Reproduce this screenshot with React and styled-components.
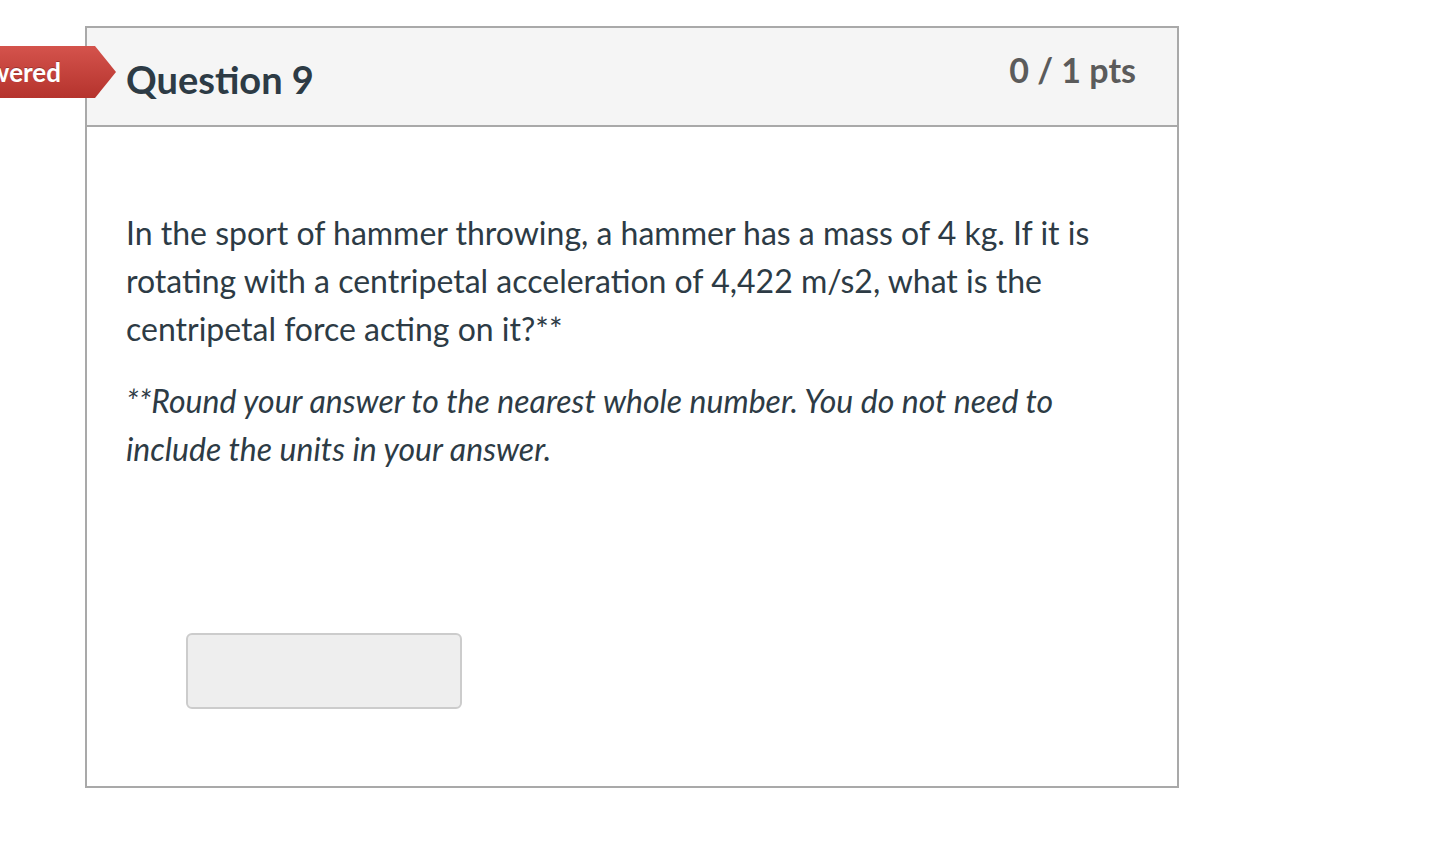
import React from 'react'
import styled, { createGlobalStyle } from 'styled-components'

const GlobalStyle = createGlobalStyle`
  html, body {
    margin: 0;
    padding: 0;
    background: #ffffff;
  }
  body {
    font-family: Lato, "Open Sans", "Liberation Sans", sans-serif;
    color: #2d3b45;
    overflow: hidden;
  }
`

const Page = styled.div`
  padding: 26px 0 0 85px;
`

const Card = styled.div`
  position: relative;
  width: 1094px;
  box-sizing: border-box;
  border: 2px solid #a9a9a9;
  background: #fff;
`

// status ribbon sticking out of the card's left side
const Badge = styled.div`
  position: absolute;
  top: 18px;
  right: calc(100% - 29px);
  height: 52px;
  display: flex;
  align-items: center;
  padding: 0 55px 0 24px;
  white-space: nowrap;
  color: #fff;
  font-weight: 700;
  font-size: 26px;
  background: linear-gradient(#d4534c, #b5332d);
  clip-path: polygon(0 0, calc(100% - 21px) 0, 100% 50%, calc(100% - 21px) 100%, 0 100%);
  text-shadow: 0 -1px 0 rgba(0, 0, 0, 0.25);
`

const Header = styled.div`
  height: 97px;
  display: flex;
  justify-content: space-between;
  align-items: flex-start;
  padding: 0 41px 0 39px;
  background: #f5f5f5;
  border-bottom: 2px solid #a9a9a9;
`

const Title = styled.h2`
  margin: 27px 0 0;
  font-size: 38px;
  line-height: 48px;
  font-weight: 700;
  color: #2d3b45;
`

const Points = styled.div`
  margin-top: 22px;
  font-size: 34px;
  line-height: 40px;
  font-weight: 700;
  color: #5b5b5b;
`

const Body = styled.div`
  padding: 82px 39px 77px;
`

const Text = styled.p`
  margin: 0 0 24px;
  font-size: 32px;
  line-height: 48px;
  font-style: ${(p) => (p.italic ? 'italic' : 'normal')};
`

const AnswerRow = styled.div`
  padding: 136px 0 0 60px;
`

const AnswerInput = styled.input`
  display: block;
  width: 276px;
  height: 76px;
  box-sizing: border-box;
  background: #eeeeee;
  border: 2px solid #cccccc;
  border-radius: 6px;
  font-family: inherit;
  font-size: 26px;
  padding: 0 12px;
  outline: none;
`

const App = () => {
  return (
    <Page>
      <GlobalStyle />
      <Card>
        <Badge>Unanswered</Badge>
        <Header>
          <Title>Question 9</Title>
          <Points>0 / 1 pts</Points>
        </Header>
        <Body>
          <Text>
            In the sport of hammer throwing, a hammer has a mass of 4 kg. If it is
            rotating with a centripetal acceleration of 4,422 m/s2, what is the
            centripetal force acting on it?**
          </Text>
          <Text italic>
            **Round your answer to the nearest whole number. You do not need to
            include the units in your answer.
          </Text>
          <AnswerRow>
            <AnswerInput type="text" />
          </AnswerRow>
        </Body>
      </Card>
    </Page>
  )
}

export default App
